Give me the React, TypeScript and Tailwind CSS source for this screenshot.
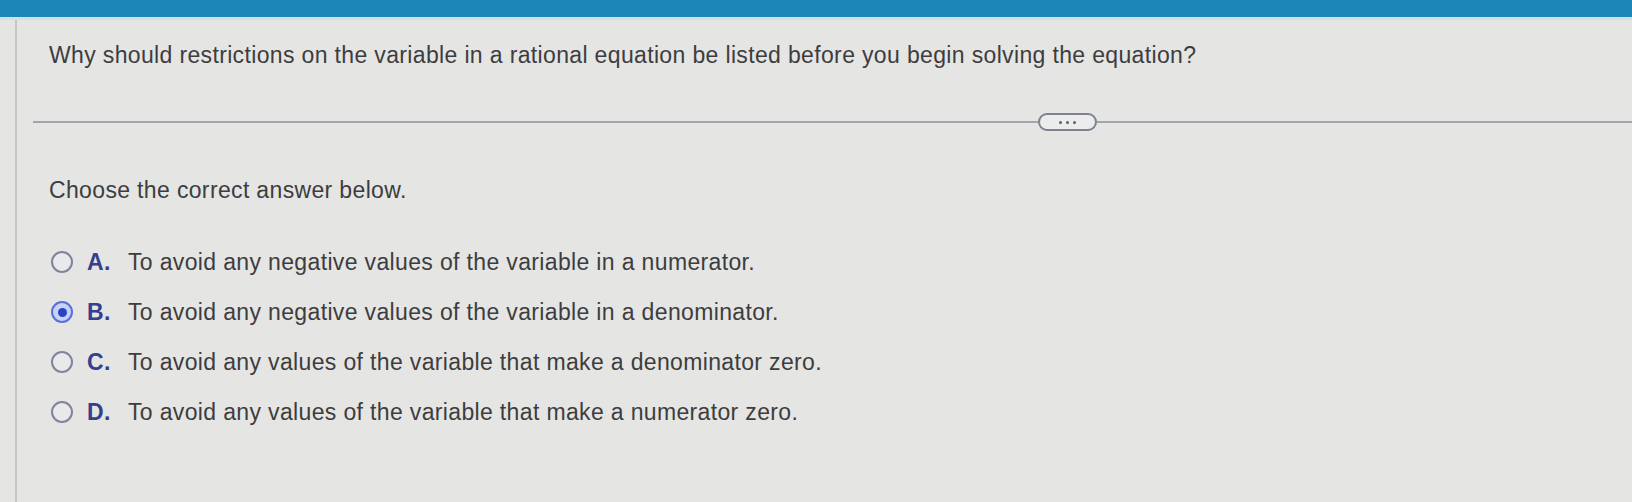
import { useState } from "react";

const options = [
  { key: "A", text: "To avoid any negative values of the variable in a numerator." },
  { key: "B", text: "To avoid any negative values of the variable in a denominator." },
  { key: "C", text: "To avoid any values of the variable that make a denominator zero." },
  { key: "D", text: "To avoid any values of the variable that make a numerator zero." },
];

function Radio({ checked }: { checked: boolean }) {
  if (checked) {
    return (
      <span className="flex h-[22px] w-[22px] shrink-0 items-center justify-center rounded-full border-2 border-[#5a6fd6] bg-[#c9d2f2]">
        <span className="h-[9px] w-[9px] rounded-full bg-[#2945c4]" />
      </span>
    );
  }
  return <span className="h-[22px] w-[22px] shrink-0 rounded-full border-2 border-[#7f849c] bg-[#e9e9ec]" />;
}

export default function App() {
  const [selected, setSelected] = useState("B");

  return (
    <div className="flex h-[502px] w-[1632px] flex-col overflow-hidden bg-[#e5e5e3] font-['Liberation_Sans',Arial,sans-serif] text-[#3d3d3f]">
      <div className="h-[17px] shrink-0 bg-[#1a87b6]" />
      <div className="h-[3px] shrink-0 bg-[#d3dfe6]" />

      <div className="flex flex-1">
        <div className="w-[15px] shrink-0" />
        <div className="w-[2px] shrink-0 bg-[#c6c6c6]" />

        <div className="flex flex-1 flex-col">
          <p className="pl-[32px] pt-[21px] text-[23px] leading-[28px] tracking-[0.35px]">
            Why should restrictions on the variable in a rational equation be listed before you begin solving the
            equation?
          </p>

          <div className="mt-[44px] flex items-center pl-[16px]">
            <div className="h-[2px] flex-1 bg-[#a3a5ad]" />
            <button
              type="button"
              className="flex h-[18px] w-[59px] items-center justify-center gap-[4px] rounded-full border-2 border-[#7c8292] bg-[#ececec]"
            >
              <span className="h-[3px] w-[3px] rounded-full bg-[#5a5f70]" />
              <span className="h-[3px] w-[3px] rounded-full bg-[#5a5f70]" />
              <span className="h-[3px] w-[3px] rounded-full bg-[#5a5f70]" />
            </button>
            <div className="h-[2px] w-[535px] bg-[#a3a5ad]" />
          </div>

          <p className="pl-[32px] pt-[45px] text-[23px] leading-[28px] tracking-[0.35px]">
            Choose the correct answer below.
          </p>

          <div className="mt-[44px] flex flex-col gap-[22px] pl-[34px]">
            {options.map((o) => (
              <label
                key={o.key}
                className="flex h-[28px] cursor-pointer items-center text-[23px] tracking-[0.35px]"
                onClick={() => setSelected(o.key)}
              >
                <Radio checked={selected === o.key} />
                <span className="ml-[14px] w-[41px] shrink-0 font-bold text-[#33408f]">{o.key}.</span>
                <span>{o.text}</span>
              </label>
            ))}
          </div>
        </div>
      </div>
    </div>
  );
}
